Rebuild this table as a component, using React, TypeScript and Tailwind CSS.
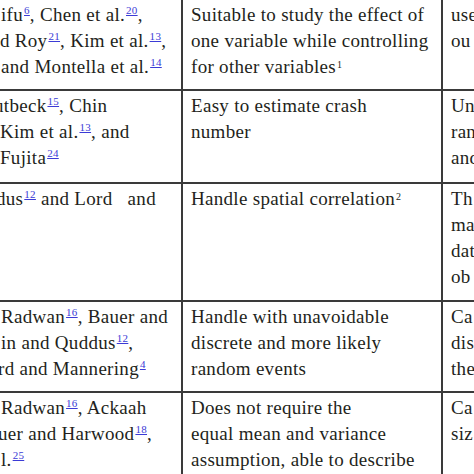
import React from "react";

const Ref = ({ n }: { n: string }) => (
  <sup className="text-[11px] text-[#3b3bd6] underline top-[-0.6em] ml-[1px]">{n}</sup>
);

const Note = ({ n }: { n: string }) => <sup className="text-[10px] ml-[1px]">{n}</sup>;

interface RowProps {
  left: React.ReactNode[];
  middle: React.ReactNode[];
  right: string[];
  height: string;
  last?: boolean;
}

const Row = ({ left, middle, right, height, last }: RowProps) => (
  <div className={`grid grid-cols-[183px_260px_1fr] ${height} ${last ? "" : "border-b-2 border-[#3a3a3a]"}`}>
    <div className="border-r-2 border-[#3a3a3a] overflow-hidden pt-[2px]">
      {left.map((l, i) => (
        <div key={i} className="whitespace-nowrap h-[26px]">{l}</div>
      ))}
    </div>
    <div className="border-r-2 border-[#3a3a3a] pl-[8px] pt-[2px]">
      {middle.map((l, i) => (
        <div key={i} className="whitespace-nowrap h-[26px]">{l}</div>
      ))}
    </div>
    <div className="pl-[8px] pt-[2px] overflow-hidden">
      {right.map((l, i) => (
        <div key={i} className="whitespace-nowrap h-[26px]">{l}</div>
      ))}
    </div>
  </div>
);

export default function App() {
  return (
    <div className="w-[474px] h-[474px] overflow-hidden bg-white text-[#231f20] text-[19px] tracking-[0.3px] leading-[26px] font-['Liberation_Serif',serif]">
      <Row
        height="h-[91px]"
        left={[
          <span className="ml-[1px]">ifu<Ref n="6" />, Chen et al.<Ref n="20" />,</span>,
          <span>d Roy<Ref n="21" />, Kim et al.<Ref n="13" />,</span>,
          <span className="ml-[1px]">and Montella et al.<Ref n="14" /></span>,
        ]}
        middle={[
          "Suitable to study the effect of",
          "one variable while controlling",
          <span>for other variables<Note n="1" /></span>,
        ]}
        right={["use", "ou"]}
      />
      <Row
        height="h-[93px]"
        left={[
          <span className="ml-[-6px]">utbeck<Ref n="15" />, Chin</span>,
          <span>Kim et al.<Ref n="13" />, and</span>,
          <span>Fujita<Ref n="24" /></span>,
        ]}
        middle={["Easy to estimate crash", "number"]}
        right={["Un", "ran", "and"]}
      />
      <Row
        height="h-[118px]"
        left={[<span className="ml-[-4px]">dus<Ref n="12" /> and Lord&nbsp;&nbsp; and</span>]}
        middle={[<span>Handle spatial correlation<Note n="2" /></span>]}
        right={["Th", "ma", "dat", "ob"]}
      />
      <Row
        height="h-[91px]"
        left={[
          <span className="ml-[1px]">Radwan<Ref n="16" />, Bauer and</span>,
          <span className="ml-[1px]">in and Quddus<Ref n="12" />,</span>,
          <span className="ml-[-2px]">rd and Mannering<Ref n="4" /></span>,
        ]}
        middle={["Handle with unavoidable", "discrete and more likely", "random events"]}
        right={["Ca", "dis", "the"]}
      />
      <Row
        height="h-[100px]"
        last
        left={[
          <span className="ml-[1px]">Radwan<Ref n="16" />, Ackaah</span>,
          <span className="ml-[-2px]">uer and Harwood<Ref n="18" />,</span>,
          <span className="ml-[1px]">l.<Ref n="25" /></span>,
        ]}
        middle={["Does not require the", "equal mean and variance", "assumption, able to describe"]}
        right={["Ca", "siz"]}
      />
    </div>
  );
}
